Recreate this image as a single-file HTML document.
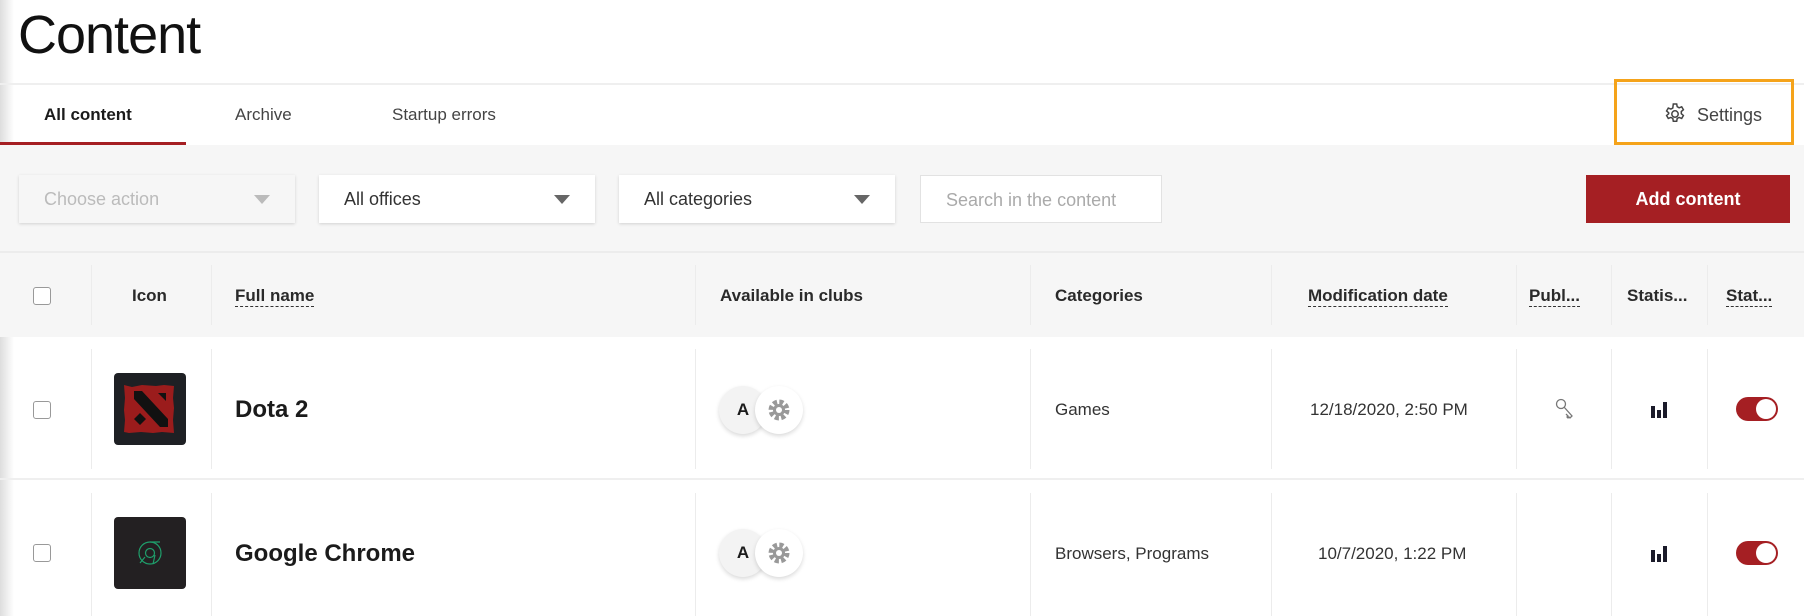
<!DOCTYPE html>
<html><head><meta charset="utf-8"><style>
*{box-sizing:border-box;margin:0;padding:0}
body{width:1804px;height:616px;overflow:hidden;background:#fff;font-family:"Liberation Sans",sans-serif;color:#1b1b1b;position:relative}
.a{position:absolute}
.sep{position:absolute;width:1px;background:#ececec}
.hd{position:absolute;top:286px;font-size:17px;font-weight:bold;color:#2a2a2a}
.dot{border-bottom:1px dashed #333;padding-bottom:1px}
.sel{position:absolute;top:175px;height:48px;width:276px;background:#fff;box-shadow:0 1px 3px rgba(0,0,0,.15);font-size:18px;padding:14px 25px;color:#333}
.sel i{position:absolute;right:25px;top:20px;border-left:8px solid transparent;border-right:8px solid transparent;border-top:9px solid #666}
.cb{position:absolute;left:33px;width:18px;height:18px;border:1px solid #999;border-radius:3px;background:#fff}
.circ{position:absolute;width:48px;height:48px;border-radius:50%;background:#f3f3f3;box-shadow:0 2px 4px rgba(0,0,0,.15);text-align:center;line-height:48px;font-weight:bold;font-size:17px}
.tog{position:absolute;left:1736px;width:42px;height:24px;border-radius:12px;background:#a51f23}
.tog::after{content:"";position:absolute;right:2px;top:2px;width:20px;height:20px;border-radius:50%;background:#fff}
</style></head><body>
<div class="a" style="left:0;top:0;width:14px;height:616px;background:linear-gradient(90deg,#ddd,#fff)"></div>
<div class="a" style="left:18px;top:4px;font-size:54px;font-weight:300;color:#111;letter-spacing:-1px">Content</div>
<div class="a" style="left:0;top:83px;width:1804px;height:2px;background:#efefef"></div>
<div class="a" style="left:44px;top:105px;font-size:17px;font-weight:bold">All content</div>
<div class="a" style="left:235px;top:105px;font-size:17px;color:#444">Archive</div>
<div class="a" style="left:392px;top:105px;font-size:17px;color:#444">Startup errors</div>
<div class="a" style="left:0;top:142px;width:186px;height:3px;background:#a51f23"></div>
<div class="a" style="left:1614px;top:79px;width:180px;height:66px;border:3px solid #f5a31a"></div>
<svg class="a" style="left:1663px;top:102px" width="24" height="24" viewBox="0 0 24 24" fill="none" stroke="#444" stroke-width="1.5"><circle cx="12" cy="12" r="3.2"/><path d="M10.3 2h3.4l.5 2.7 1.9 1.1 2.6-1 1.7 2.9-2.1 1.8v2.2l2.1 1.8-1.7 2.9-2.6-1-1.9 1.1-.5 2.7h-3.4l-.5-2.7-1.9-1.1-2.6 1-1.7-2.9 2.1-1.8V10.8L3.6 9l1.7-2.9 2.6 1 1.9-1.1z"/></svg>
<div class="a" style="left:1697px;top:105px;font-size:18px;color:#444">Settings</div>
<div class="a" style="left:0;top:145px;width:1804px;height:192px;background:#f6f6f6"></div>
<div class="sel" style="left:19px;background:#f6f6f6;color:#bbb">Choose action<i style="border-top-color:#bbb"></i></div>
<div class="sel" style="left:319px">All offices<i></i></div>
<div class="sel" style="left:619px">All categories<i></i></div>
<div class="sel" style="left:920px;width:242px;color:#aaa;border:1px solid #e2e2e2;box-shadow:none">Search in the content</div>
<div class="a" style="left:1586px;top:175px;width:204px;height:48px;background:#a51f23;color:#fff;font-weight:bold;font-size:18px;text-align:center;line-height:48px">Add content</div>
<div class="a" style="left:0;top:251px;width:1804px;height:2px;background:#ececec"></div>
<div class="cb" style="top:287px"></div>
<div class="hd" style="left:132px">Icon</div>
<div class="hd" style="left:235px"><span class="dot">Full name</span></div>
<div class="hd" style="left:720px">Available in clubs</div>
<div class="hd" style="left:1055px">Categories</div>
<div class="hd" style="left:1308px"><span class="dot">Modification date</span></div>
<div class="hd" style="left:1529px"><span class="dot">Publ...</span></div>
<div class="hd" style="left:1627px">Statis...</div>
<div class="hd" style="left:1726px"><span class="dot">Stat...</span></div>
<div class="a" style="left:0;top:478px;width:1804px;height:2px;background:#efefef"></div>
<div class="sep" style="left:91px;top:265px;height:60px"></div><div class="sep" style="left:211px;top:265px;height:60px"></div><div class="sep" style="left:695px;top:265px;height:60px"></div><div class="sep" style="left:1030px;top:265px;height:60px"></div><div class="sep" style="left:1271px;top:265px;height:60px"></div><div class="sep" style="left:1516px;top:265px;height:60px"></div><div class="sep" style="left:1611px;top:265px;height:60px"></div><div class="sep" style="left:1707px;top:265px;height:60px"></div>
<div class="sep" style="left:91px;top:349px;height:120px"></div><div class="sep" style="left:211px;top:349px;height:120px"></div><div class="sep" style="left:695px;top:349px;height:120px"></div><div class="sep" style="left:1030px;top:349px;height:120px"></div><div class="sep" style="left:1271px;top:349px;height:120px"></div><div class="sep" style="left:1516px;top:349px;height:120px"></div><div class="sep" style="left:1611px;top:349px;height:120px"></div><div class="sep" style="left:1707px;top:349px;height:120px"></div>
<div class="sep" style="left:91px;top:493px;height:123px"></div><div class="sep" style="left:211px;top:493px;height:123px"></div><div class="sep" style="left:695px;top:493px;height:123px"></div><div class="sep" style="left:1030px;top:493px;height:123px"></div><div class="sep" style="left:1271px;top:493px;height:123px"></div><div class="sep" style="left:1516px;top:493px;height:123px"></div><div class="sep" style="left:1611px;top:493px;height:123px"></div><div class="sep" style="left:1707px;top:493px;height:123px"></div>
<div class="cb" style="top:401px"></div>
<div class="a" style="left:114px;top:373px;width:72px;height:72px;background:#1e2024;border-radius:4px"><svg width="72" height="72" viewBox="0 0 72 72"><path d="M10 12l8 2 10-2 14 1 8-1 10 1-1 12 1 10-1 12 1 13-12-1-9 1-12-1-12 1-5-1 1-12-1-10 1-12z" fill="#9b1c1c"/><path d="M20 18h8l26 28v8h-8L20 26z M20 46l6-6 6 6-6 6z M44 20l8 0v8z" fill="#111"/></svg></div>
<div class="a" style="left:235px;top:396px;font-size:24px;font-weight:bold">Dota 2</div>
<div class="circ" style="left:719px;top:386px">A</div>
<div class="circ" style="left:755px;top:386px;background:#fff"><svg width="48" height="48" viewBox="0 0 48 48"><circle cx="24" cy="24" r="8" fill="none" stroke="#999" stroke-width="5" stroke-dasharray="4 2.3"/><circle cx="24" cy="24" r="6" fill="#999"/><circle cx="24" cy="24" r="3" fill="#fff"/></svg></div>
<div class="a" style="left:1055px;top:400px;font-size:17px;color:#333">Games</div>
<div class="a" style="left:1310px;top:400px;font-size:17px;color:#333">12/18/2020, 2:50 PM</div>
<svg class="a" style="left:1554px;top:398px" width="22" height="22" viewBox="0 0 22 22" fill="none" stroke="#777" stroke-width="1.3"><circle cx="7" cy="6" r="4.5"/><path d="M10 9l8 9-2 2-1-1-1 1-1-1 1-1-2-2"/></svg>
<svg class="a" style="left:1650px;top:400px" width="18" height="18"><rect x="1" y="6" width="4" height="12" fill="#1b1b2a"/><rect x="7" y="10" width="4" height="8" fill="#1b1b2a"/><rect x="13" y="2" width="4" height="16" fill="#1b1b2a"/></svg>
<div class="tog" style="top:397px"></div>
<div class="cb" style="top:544px"></div>
<div class="a" style="left:114px;top:517px;width:72px;height:72px;background:#232022;border-radius:4px"><svg width="72" height="72" viewBox="0 0 72 72" fill="none" stroke="#1f9e6b" stroke-width="1.2"><circle cx="36" cy="36" r="11"/><circle cx="36" cy="36" r="4.5"/><path d="M36 25h10M31 40l-5 6M41 38l-2 9"/></svg></div>
<div class="a" style="left:235px;top:540px;font-size:24px;font-weight:bold">Google Chrome</div>
<div class="circ" style="left:719px;top:529px">A</div>
<div class="circ" style="left:755px;top:529px;background:#fff"><svg width="48" height="48" viewBox="0 0 48 48"><circle cx="24" cy="24" r="8" fill="none" stroke="#999" stroke-width="5" stroke-dasharray="4 2.3"/><circle cx="24" cy="24" r="6" fill="#999"/><circle cx="24" cy="24" r="3" fill="#fff"/></svg></div>
<div class="a" style="left:1055px;top:544px;font-size:17px;color:#333">Browsers, Programs</div>
<div class="a" style="left:1318px;top:544px;font-size:17px;color:#333">10/7/2020, 1:22 PM</div>
<svg class="a" style="left:1650px;top:544px" width="18" height="18"><rect x="1" y="6" width="4" height="12" fill="#1b1b2a"/><rect x="7" y="10" width="4" height="8" fill="#1b1b2a"/><rect x="13" y="2" width="4" height="16" fill="#1b1b2a"/></svg>
<div class="tog" style="top:541px"></div>
</body></html>
